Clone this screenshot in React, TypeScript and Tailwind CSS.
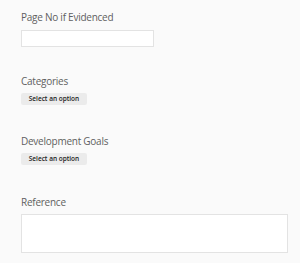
export default function App() {
  return (
    <div className="w-[300px] h-[263px] bg-[#fafafa] pl-[21px] pr-[12px] pt-[10px] text-[#5f5f5f] font-['Open_Sans',sans-serif]">
      <div className="flex flex-col">
        <label className="text-[10px] leading-[14px] tracking-[-0.25px]">Page No if Evidenced</label>
        <input className="mt-[6px] w-[133px] h-[17px] bg-white border border-[#e3e3e3] outline-none" />
      </div>

      <div className="mt-[27px] flex flex-col items-start">
        <label className="text-[10px] leading-[14px] tracking-[-0.25px]">Categories</label>
        <button className="mt-[5px] w-[66px] h-[12px] bg-[#ebebeb] rounded-[2px] text-[6.5px] font-semibold leading-[12px] text-[#222222]">
          Select an option
        </button>
      </div>

      <div className="mt-[29px] flex flex-col items-start">
        <label className="text-[10px] leading-[14px] tracking-[-0.25px]">Development Goals</label>
        <button className="mt-[5px] w-[66px] h-[12px] bg-[#ebebeb] rounded-[2px] text-[6.5px] font-semibold leading-[12px] text-[#222222]">
          Select an option
        </button>
      </div>

      <div className="mt-[30px] flex flex-col">
        <label className="text-[10px] leading-[14px] tracking-[-0.25px]">Reference</label>
        <textarea className="mt-[5px] w-[267px] h-[39px] bg-white border border-[#e3e3e3] outline-none resize-none" />
      </div>
    </div>
  );
}
